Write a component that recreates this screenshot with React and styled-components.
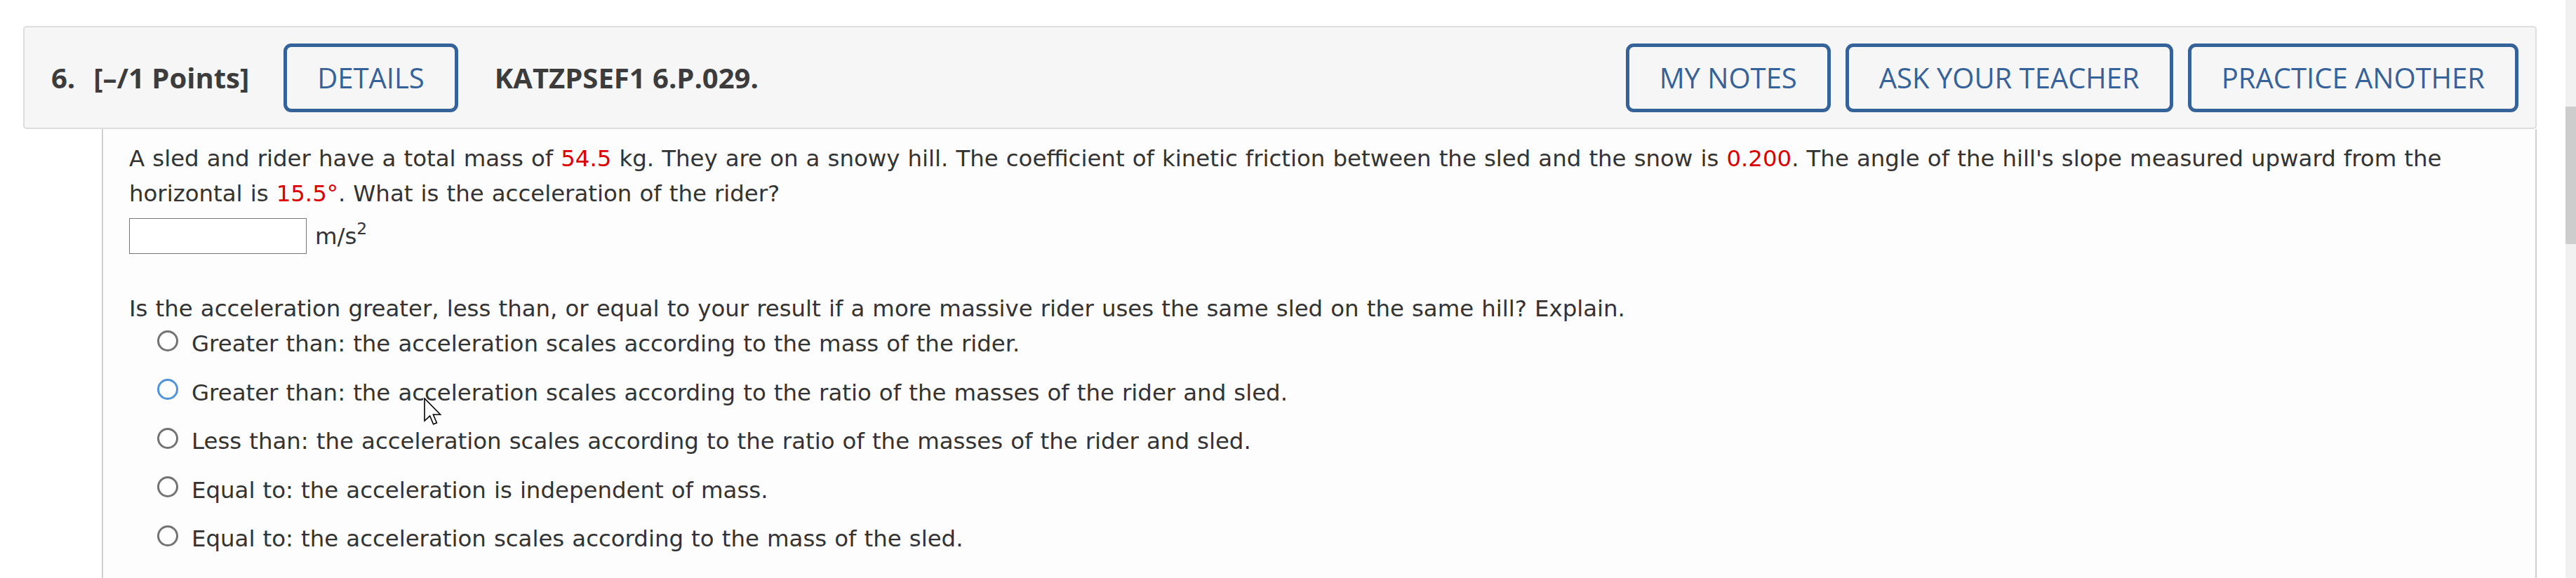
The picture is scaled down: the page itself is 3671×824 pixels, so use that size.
import React from "react";
import styled, { createGlobalStyle } from "styled-components";

const Global = createGlobalStyle`
  html, body { margin: 0; padding: 0; background: #ffffff; }
  body { font-family: "DejaVu Sans", Verdana, sans-serif; }
  * { box-sizing: border-box; }
`;

const Page = styled.div`
  display: flex;
  width: 3671px;
  height: 824px;
  overflow: hidden;
  position: relative;
`;

const Main = styled.div`
  flex: 1;
  display: flex;
  flex-direction: column;
  padding: 37px 41px 0 33px;
`;

const Header = styled.div`
  height: 147px;
  display: flex;
  align-items: center;
  justify-content: space-between;
  background: #f6f6f6;
  border: 2px solid #dedede;
  border-radius: 5px;
  padding: 0 24px 0 38px;
  font-family: "Open Sans", "Liberation Sans", sans-serif;
  font-size: 40px;
  color: #3c3c3c;
`;

const Group = styled.div`
  display: flex;
  align-items: center;
  gap: ${(p) => p.$gap || 0}px;
`;

const Num = styled.span`
  font-weight: 700;
  margin-right: 26px;
`;

const Points = styled.span`
  font-weight: 700;
  margin-right: 49px;
`;

const Code = styled.span`
  font-weight: 700;
  margin-left: 52px;
`;

const OutlineButton = styled.button`
  height: 98px;
  padding: 0 43px;
  border: 5px solid #36629a;
  border-radius: 11px;
  background: transparent;
  color: #36629a;
  font-family: "Open Sans", "Liberation Sans", sans-serif;
  font-size: 40px;
  font-weight: 500;
  white-space: nowrap;
  cursor: pointer;
`;

const Body = styled.div`
  flex: 1;
  margin-left: 112px;
  border-left: 2px solid #cfcfcf;
  border-right: 2px solid #cfcfcf;
  background: #fdfdfd;
  padding: 17px 40px 0 37px;
  font-size: 32.4px;
  word-spacing: 0.8px;
  line-height: 50px;
  color: #333333;
`;

const Para = styled.p`
  margin: ${(p) => p.$top || 0}px 0 0 0;
`;

const Given = styled.span`
  color: #dd0000;
`;

const AnswerRow = styled.div`
  display: flex;
  align-items: center;
  gap: 12px;
  margin-top: 10px;
`;

const AnswerInput = styled.input`
  width: 253px;
  height: 51px;
  border: 1px solid #767676;
  background: #ffffff;
  padding: 0;
  margin: 0;
`;

const Unit = styled.span`
  line-height: 50px;
  sup {
    font-size: 0.72em;
    line-height: 0;
    vertical-align: 0.6em;
  }
`;

const Options = styled.div`
  display: flex;
  flex-direction: column;
  gap: 19.5px;
  padding-left: 40px;
`;

const Option = styled.label`
  display: flex;
  align-items: center;
  gap: 19px;
  height: 50px;
`;

const Radio = styled.span`
  width: 30px;
  height: 30px;
  border-radius: 50%;
  border: 3px solid ${(p) => (p.$hover ? "#4f93d9" : "#737373")};
  background: #ffffff;
  margin-bottom: 9px;
  flex: none;
`;

const ScrollTrack = styled.div`
  width: 15px;
  height: 824px;
  background: #f1f1f1;
  padding-top: 152px;
`;

const ScrollThumb = styled.div`
  width: 100%;
  height: 196px;
  background: #cdcdcd;
`;

const Cursor = styled.svg`
  position: absolute;
  left: 604px;
  top: 567px;
  width: 26px;
  height: 40px;
  pointer-events: none;
`;

const options = [
  "Greater than: the acceleration scales according to the mass of the rider.",
  "Greater than: the acceleration scales according to the ratio of the masses of the rider and sled.",
  "Less than: the acceleration scales according to the ratio of the masses of the rider and sled.",
  "Equal to: the acceleration is independent of mass.",
  "Equal to: the acceleration scales according to the mass of the sled.",
];

export default function App() {
  return (
    <Page>
      <Global />
      <Main>
        <Header>
          <Group>
            <Num>6.</Num>
            <Points>[–/1 Points]</Points>
            <OutlineButton>DETAILS</OutlineButton>
            <Code>KATZPSEF1 6.P.029.</Code>
          </Group>
          <Group $gap={21}>
            <OutlineButton>MY NOTES</OutlineButton>
            <OutlineButton>ASK YOUR TEACHER</OutlineButton>
            <OutlineButton>PRACTICE ANOTHER</OutlineButton>
          </Group>
        </Header>
        <Body>
          <Para>
            A sled and rider have a total mass of <Given>54.5</Given> kg. They are on a snowy hill. The
            coefficient of kinetic friction between the sled and the snow is <Given>0.200</Given>. The angle
            of the hill's slope measured upward from the horizontal is <Given>15.5°</Given>. What is the
            acceleration of the rider?
          </Para>
          <AnswerRow>
            <AnswerInput type="text" />
            <Unit>
              m/s<sup>2</sup>
            </Unit>
          </AnswerRow>
          <Para $top={53}>
            Is the acceleration greater, less than, or equal to your result if a more massive rider uses the
            same sled on the same hill? Explain.
          </Para>
          <Options>
            {options.map((t, i) => (
              <Option key={i}>
                <Radio $hover={i === 1} />
                <span>{t}</span>
              </Option>
            ))}
          </Options>
        </Body>
      </Main>
      <ScrollTrack>
        <ScrollThumb />
      </ScrollTrack>
      <Cursor viewBox="0 0 13 20">
        <path
          d="M0.5 0.5 L0.5 16.5 L4.3 12.9 L6.8 18.9 L9.2 17.9 L6.7 12 L11.8 12 Z"
          fill="#ffffff"
          stroke="#000000"
          strokeWidth="0.8"
          strokeLinejoin="miter"
        />
      </Cursor>
    </Page>
  );
}
